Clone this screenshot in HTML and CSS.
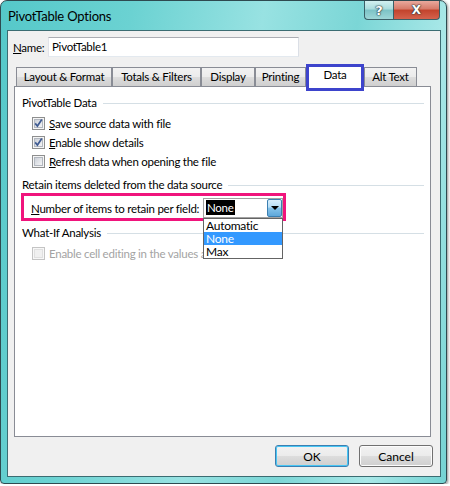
FILE: index.html
```html
<!DOCTYPE html>
<html lang="en">
<head>
  <meta charset="utf-8" />
  <title>PivotTable Options</title>
  <link rel="stylesheet" href="styles.css">
</head>
<body>
  <svg class="defs" width="0" height="0">
    <defs>
      <linearGradient id="boxFill" x1="0" y1="0" x2="1" y2="1">
        <stop offset="0" stop-color="#c9ced6" />
        <stop offset="1" stop-color="#f7f7f8" />
      </linearGradient>
      <symbol id="chk-on" viewBox="0 0 13 13">
        <rect x="0.5" y="0.5" width="12" height="12" fill="#f5f5f5" stroke="#8e8f8f" />
        <rect x="2.5" y="2.5" width="8" height="8" fill="url(#boxFill)" stroke="#b2b7bf" />
        <path d="M3.2 6.4 L5.4 9 L9.8 2.6" fill="none" stroke="#3f5b92" stroke-width="1.7" />
      </symbol>
      <symbol id="chk-off" viewBox="0 0 13 13">
        <rect x="0.5" y="0.5" width="12" height="12" fill="#f5f5f5" stroke="#8e8f8f" />
        <rect x="2.5" y="2.5" width="8" height="8" fill="url(#boxFill)" stroke="#b2b7bf" />
      </symbol>
      <symbol id="chk-dis" viewBox="0 0 13 13">
        <rect x="0.5" y="0.5" width="12" height="12" fill="#f7f7f7" stroke="#c4c4c4" />
        <rect x="2.5" y="2.5" width="8" height="8" fill="#f0f0f0" stroke="#e0e0e0" />
      </symbol>
    </defs>
  </svg>

  <div class="window">
    <div class="titlebar">
      <span class="title">PivotTable Options</span>
      <div class="caption-btns">
        <span class="cap-btn help">?</span>
        <span class="cap-btn close">X</span>
      </div>
    </div>

    <div class="client">
      <div class="name-row">
        <label><u>N</u>ame:</label>
        <div class="textbox">PivotTable1</div>
      </div>

      <div class="tabs">
        <div class="tab tab-layout">Layout &amp; Format</div>
        <div class="tab tab-totals">Totals &amp; Filters</div>
        <div class="tab tab-display">Display</div>
        <div class="tab tab-printing">Printing</div>
        <div class="tab tab-data active">Data</div>
        <div class="tab tab-alt">Alt Text</div>
      </div>

      <div class="panel">
        <div class="group-head"><span>PivotTable Data</span><i class="rule"></i></div>
        <div class="check">
          <svg class="box"><use href="#chk-on" /></svg>
          <span><u>S</u>ave source data with file</span>
        </div>
        <div class="check">
          <svg class="box"><use href="#chk-on" /></svg>
          <span><u>E</u>nable show details</span>
        </div>
        <div class="check">
          <svg class="box"><use href="#chk-off" /></svg>
          <span><u>R</u>efresh data when opening the file</span>
        </div>

        <div class="group-head gap"><span>Retain items deleted from the data source</span><i class="rule"></i></div>
        <div class="retain-row">
          <span class="retain-label"><u>N</u>umber of items to retain per field:</span>
          <div class="combo">
            <span class="combo-value"><span class="sel">None</span></span>
            <span class="combo-btn"><i class="arrow"></i></span>
            <ul class="combo-list">
              <li>Automatic</li>
              <li class="hot">None</li>
              <li>Max</li>
            </ul>
          </div>
        </div>

        <div class="group-head small-gap"><span>What-If Analysis</span><i class="rule"></i></div>
        <div class="check disabled">
          <svg class="box"><use href="#chk-dis" /></svg>
          <span>Enable cell editing in the values area</span>
        </div>
      </div>

      <div class="buttons">
        <button class="btn default">OK</button>
        <button class="btn">Cancel</button>
      </div>
    </div>
  </div>
</body>
</html>
```

FILE: styles.css
```css
:root {
  --ui-font: Lato, 'Noto Sans', sans-serif;
  --panel-border: #898c95;
  --client-bg: #f0f0f0;
  --rule: #d5dfe5;
}

* {
  box-sizing: border-box;
  margin: 0;
  padding: 0;
}

body {
  background: #ffffff;
  font-family: var(--ui-font);
  font-size: 11.5px;
  letter-spacing: -0.25px;
  color: #000000;
}

.defs {
  position: absolute;
}

/* Window frame */
.window {
  width: 447px;
  height: 484px;
  border: 1px solid #2e4a50;
  border-radius: 7px 7px 4px 4px;
  background: linear-gradient(100deg, #55c8c9 0%, #6bd2d2 25%, #98e2e2 50%, #7bd6d6 68%, #a9e8e8 85%, #74d3d3 100%);
  box-shadow: 1px 1px 3px rgba(0, 0, 0, 0.45);
  display: flex;
  flex-direction: column;
}

.titlebar {
  height: 29px;
  display: flex;
}

.title {
  padding: 6px 0 0 7px;
  font-size: 13px;
  letter-spacing: -0.2px;
  line-height: 18px;
  color: #000000;
  white-space: nowrap;
}

.caption-btns {
  margin-left: auto;
  margin-right: 6px;
  display: flex;
  align-self: flex-start;
}

.cap-btn {
  height: 19px;
  display: flex;
  align-items: center;
  justify-content: center;
  border: 1px solid #3a5f66;
  border-top: none;
  color: #ffffff;
  font-family: 'DejaVu Sans', sans-serif;
  font-weight: bold;
  font-size: 13px;
  letter-spacing: 0;
  text-shadow: 0 0 1px #26393c, 0 0 1px #26393c, 0 0 2px #26393c;
}

.cap-btn.help {
  width: 29px;
  border-right: none;
  border-radius: 0 0 0 4px;
  background: linear-gradient(#d2f0f0, #a9dcdd 45%, #7cc3c6 50%, #9ed7d8);
}

.cap-btn.close {
  width: 47px;
  border-radius: 0 0 4px 0;
  background: linear-gradient(#e9a99d, #d67a69 45%, #c2432c 50%, #d4624d);
  font-size: 12px;
}

.client {
  margin-left: 6px;
  width: 434px;
  height: 447px;
  border: 1px solid #3b6c72;
  background: var(--client-bg);
}

/* Name */
.name-row {
  margin: 6px 0 0 5px;
  display: flex;
  align-items: center;
  height: 20px;
}

.name-row label {
  width: 35px;
}

.textbox {
  width: 251px;
  height: 20px;
  border: 1px solid #abadb3;
  border-color: #abadb3 #dbdfe6 #e3e9ef #e2e3ea;
  background: #ffffff;
  padding: 1px 0 0 3px;
  line-height: 16px;
}

/* Tabs */
.tabs {
  margin: 7px 0 0 8px;
  height: 22px;
  display: flex;
  align-items: flex-end;
}

.tab {
  height: 19px;
  border: 1px solid var(--panel-border);
  border-bottom: none;
  background: linear-gradient(#f2f2f2, #ebebeb 50%, #dddddd 51%, #cfcfcf);
  text-align: center;
  line-height: 17px;
  white-space: nowrap;
}

.tab-layout { width: 96px; }
.tab-totals { width: 89px; }
.tab-display { width: 54px; }
.tab-printing { width: 51px; }
.tab-data { width: 58px; }
.tab-alt { width: 53px; }

.tab.active {
  position: relative;
  z-index: 2;
  height: 23px;
  margin-bottom: -1px;
  background: #ffffff;
  line-height: 20px;
}

/* highlight marker drawn round the active tab */
.tab.active::after {
  content: '';
  position: absolute;
  left: -1px;
  right: -1px;
  top: -1px;
  bottom: -4px;
  border: 3px solid #3d44cc;
}

.panel {
  position: relative;
  margin-left: 6px;
  width: 417px;
  height: 351px;
  border: 1px solid var(--panel-border);
  background: #ffffff;
  padding: 8px 6px 0 7px;
}

.group-head {
  display: flex;
  align-items: center;
  height: 16px;
  line-height: 16px;
  margin-bottom: 3px;
  white-space: nowrap;
}

.group-head.gap {
  margin-top: 6px;
  margin-bottom: 0;
}

.group-head.small-gap {
  margin-top: 4px;
}

.group-head .rule {
  flex: 1;
  height: 1px;
  margin-left: 6px;
  background: var(--rule);
}

.check {
  height: 19px;
  margin-left: 10px;
  display: flex;
  align-items: center;
  gap: 4px;
  white-space: nowrap;
}

.check .box {
  width: 13px;
  height: 13px;
  flex-shrink: 0;
}

.check.disabled {
  color: #a3a3a3;
}

/* Retain row with pink callout */
.retain-row {
  margin-left: -1px;
  width: 265px;
  height: 28px;
  border: 3px solid #f0147c;
  padding: 2px 0 0 7px;
  display: flex;
  align-items: center;
}

.retain-label {
  white-space: nowrap;
}

.combo {
  position: relative;
  z-index: 3;
  margin-left: auto;
  width: 80px;
  height: 20px;
  flex-shrink: 0;
  border: 1px solid #a2a2a2;
  background: #ffffff;
  display: flex;
}

.combo-value {
  flex: 1;
  padding: 1px 0 0 2px;
}

.combo-value .sel {
  display: inline-block;
  background: #000000;
  color: #ffffff;
  line-height: 15px;
  padding: 0 1px;
}

.combo-btn {
  width: 15px;
  height: 18px;
  border: 1px solid #3c7fb1;
  border-radius: 2px;
  background: linear-gradient(#d9effc, #b7dff7 45%, #86c3ea 50%, #5ea7da);
  display: flex;
  align-items: center;
  justify-content: center;
}

.arrow {
  width: 0;
  height: 0;
  border-left: 4px solid transparent;
  border-right: 4px solid transparent;
  border-top: 4px solid #000000;
}

.combo-list {
  position: absolute;
  left: -1px;
  top: 19px;
  width: 80px;
  border: 1px solid #646464;
  background: #ffffff;
  list-style: none;
  font-size: 12px;
}

.combo-list li {
  height: 13px;
  line-height: 13px;
  padding-left: 2px;
}

.combo-list li.hot {
  background: #3399ff;
  color: #ffffff;
}

/* Bottom buttons */
.buttons {
  margin-top: 8px;
  padding-right: 7px;
  display: flex;
  justify-content: flex-end;
  gap: 10px;
}

.btn {
  width: 74px;
  height: 22px;
  font-family: var(--ui-font);
  font-size: 12px;
  border: 1px solid #707070;
  border-radius: 3px;
  background: linear-gradient(#f2f2f2, #ebebeb 50%, #dddddd 51%, #cfcfcf);
  box-shadow: inset 0 0 0 1px #fcfcfc;
  color: #000000;
}

.btn.default {
  border-color: #3c7fb1;
  box-shadow: inset 0 0 0 1px #48c6f4;
}
```
